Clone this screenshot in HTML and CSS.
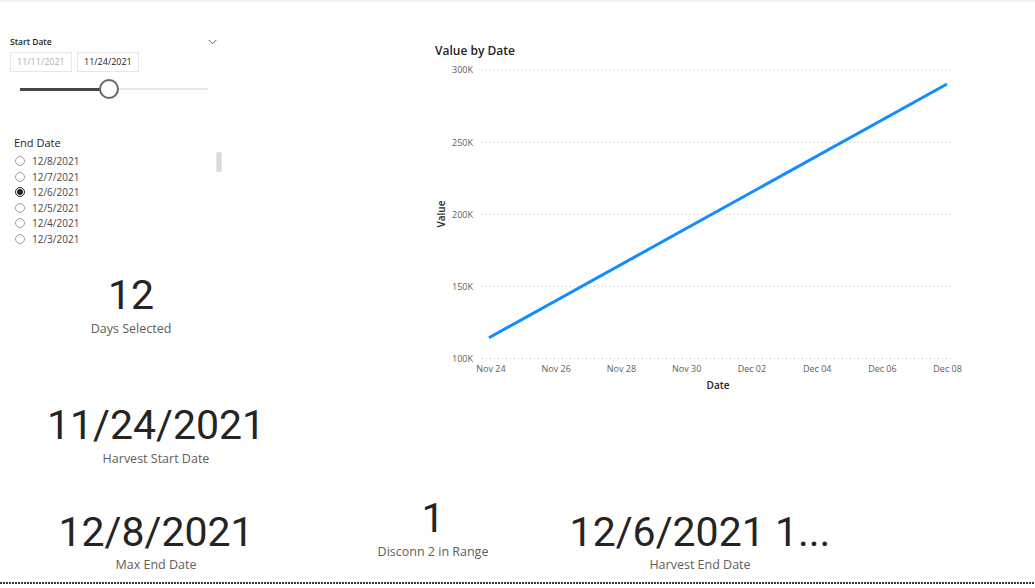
FILE: index.html
```html
<!DOCTYPE html>
<html lang="en">
<head>
<meta charset="UTF-8" />
<meta name="viewport" content="width=device-width, initial-scale=1" />
<title>Harvest Report</title>
<link rel="stylesheet" href="styles.css">
</head>
<body>

<div class="page">
  <div class="topbar"></div>

  <div class="main">
    <div class="left-col">

      <!-- Start date range slicer -->
      <div class="slicer-start">
        <div class="slicer-head">
          <span>Start Date</span>
          <svg class="chevron" width="9" height="6" viewBox="0 0 9 6">
            <polyline points="0.5,0.8 4.5,4.8 8.5,0.8" fill="none" stroke="#605e5c" stroke-width="1" />
          </svg>
        </div>
        <div class="date-inputs">
          <div class="date-box muted">11/11/2021</div>
          <div class="date-box">11/24/2021</div>
        </div>
        <div class="slider">
          <div class="slider-fill"></div>
          <div class="slider-thumb"></div>
          <div class="slider-track"></div>
        </div>
      </div>

      <!-- End date list slicer -->
      <div class="slicer-end">
        <div class="slicer-title">End Date</div>
        <div class="slicer-body">
          <ul class="radio-list">
            <li><span class="radio"></span>12/8/2021</li>
            <li><span class="radio"></span>12/7/2021</li>
            <li><span class="radio checked"></span>12/6/2021</li>
            <li><span class="radio"></span>12/5/2021</li>
            <li><span class="radio"></span>12/4/2021</li>
            <li><span class="radio"></span>12/3/2021</li>
          </ul>
          <div class="scrollbar"></div>
        </div>
      </div>

      <div class="card card-days">
        <div class="card-value">12</div>
        <div class="card-label">Days Selected</div>
      </div>
    </div>

    <!-- Line chart -->
    <svg class="chart" width="560" height="365" viewBox="0 0 560 365">
      <text class="chart-title" x="10" y="20">Value by Date</text>

      <g class="grid">
        <line x1="57" y1="35" x2="527" y2="35" />
        <line x1="57" y1="107.3" x2="527" y2="107.3" />
        <line x1="57" y1="179.3" x2="527" y2="179.3" />
        <line x1="57" y1="251.3" x2="527" y2="251.3" />
        <line x1="57" y1="323.7" x2="527" y2="323.7" />
      </g>

      <g class="y-labels">
        <text x="48" y="38.2">300K</text>
        <text x="48" y="110.5">250K</text>
        <text x="48" y="182.5">200K</text>
        <text x="48" y="254.5">150K</text>
        <text x="48" y="326.9">100K</text>
      </g>

      <g class="x-labels">
        <text x="66" y="336.6">Nov 24</text>
        <text x="131.2" y="336.6">Nov 26</text>
        <text x="196.5" y="336.6">Nov 28</text>
        <text x="261.7" y="336.6">Nov 30</text>
        <text x="326.9" y="336.6">Dec 02</text>
        <text x="392.2" y="336.6">Dec 04</text>
        <text x="457.4" y="336.6">Dec 06</text>
        <text x="522.6" y="336.6">Dec 08</text>
      </g>

      <text class="axis-title" x="20" y="179" transform="rotate(-90 20 179)">Value</text>
      <text class="axis-title" x="293" y="353.5">Date</text>

      <line class="series" x1="64" y1="302.7" x2="522" y2="49" />
    </svg>
  </div>

  <div class="card card-start">
    <div class="card-value">11/24/2021</div>
    <div class="card-label">Harvest Start Date</div>
  </div>

  <div class="card-row">
    <div class="card card-max">
      <div class="card-value">12/8/2021</div>
      <div class="card-label">Max End Date</div>
    </div>
    <div class="card card-disconn">
      <div class="card-value">1</div>
      <div class="card-label">Disconn 2 in Range</div>
    </div>
    <div class="card card-end">
      <div class="card-value">12/6/2021 1...</div>
      <div class="card-label">Harvest End Date</div>
    </div>
  </div>

  <div class="page-edge"></div>
</div>

</body>
</html>
```

FILE: styles.css
```css
* {
  box-sizing: border-box;
}
body {
  margin: 0;
  background: #fff;
  font-family: "Open Sans", "Noto Sans", sans-serif;
  color: #252423;
  overflow: hidden;
}

.page {
  width: 1035px;
  height: 588px;
  display: flex;
  flex-direction: column;
}
.topbar {
  height: 2px;
  background: #f0f0f0;
  flex: none;
}

.main {
  display: flex;
  height: 398px;
  flex: none;
}
.left-col {
  width: 262px;
  flex: none;
}

/* Start Date slicer */
.slicer-start {
  margin: 34px 0 0 10px;
  width: 208px;
}
.slicer-head {
  display: flex;
  justify-content: space-between;
  align-items: center;
  height: 12px;
  line-height: 12px;
  font-size: 8.5px;
  font-weight: 600;
}
.chevron {
  margin-right: 1px;
}
.date-inputs {
  display: flex;
  gap: 5px;
  margin-top: 4px;
}
.date-box {
  width: 62px;
  height: 20px;
  border: 1px solid #e6e6e6;
  font-size: 9px;
  line-height: 18px;
  padding-left: 6px;
  color: #252423;
}
.date-box.muted {
  color: #b3b0ad;
}

.slider {
  display: flex;
  align-items: center;
  height: 20px;
  margin: 7px 0 0 10px;
  width: 188px;
}
.slider-fill {
  width: 80px;
  height: 3px;
  background: #484644;
}
.slider-thumb {
  width: 20px;
  height: 20px;
  margin-left: -1px;
  border-radius: 50%;
  border: 2px solid #666;
  background: #fff;
  flex: none;
}
.slider-track {
  flex: 1;
  height: 2px;
  background: #e6e6e6;
}

/* End Date slicer */
.slicer-end {
  margin: 36px 0 0 14px;
  width: 208px;
}
.slicer-title {
  font-size: 11px;
  line-height: 15px;
  font-weight: 500;
}
.slicer-body {
  display: flex;
  justify-content: space-between;
}
.radio-list {
  list-style: none;
  margin: 0;
  padding: 3.5px 0 0 1px;
}
.radio-list li {
  display: flex;
  align-items: center;
  gap: 7px;
  height: 15.5px;
  font-size: 10px;
  color: #484644;
}
.radio {
  width: 10px;
  height: 10px;
  border-radius: 50%;
  border: 1px solid #a19f9d;
  display: flex;
  align-items: center;
  justify-content: center;
}
.radio.checked {
  border-color: #252423;
}
.radio.checked::after {
  content: "";
  width: 6px;
  height: 6px;
  border-radius: 50%;
  background: #252423;
}
.scrollbar {
  width: 6px;
  height: 20px;
  margin-top: 1.5px;
  background: #d9d9d9;
  border: 1px solid #e8e8e8;
}

/* Cards */
.card {
  text-align: center;
  white-space: nowrap;
}
.card-value {
  font-family: Roboto, "Liberation Sans", sans-serif;
  font-size: 41px;
  line-height: 44px;
  color: #252423;
}
.card-label {
  font-size: 12.5px;
  line-height: 16px;
  color: #605e5c;
}
.card-days {
  margin-top: 26px;
}
.card-days .card-label {
  margin-top: 4px;
}

.card-start {
  width: 312px;
  margin-top: 3px;
  flex: none;
}
.card-start .card-label {
  margin-top: 3.6px;
}

.card-row {
  display: flex;
  align-items: flex-start;
  flex: none;
}
.card-max {
  width: 312px;
  margin-top: 43.4px;
}
.card-disconn {
  width: 242px;
  margin-top: 29.4px;
}
.card-end {
  width: 292px;
  margin-top: 43.4px;
}
.card-max .card-label,
.card-end .card-label {
  margin-top: 3.4px;
}
.card-disconn .card-label {
  margin-top: 4px;
}

.page-edge {
  margin-top: auto;
  margin-bottom: 4px;
  height: 2px;
  background: repeating-linear-gradient(90deg, #3b3a39 0 2px, transparent 2px 3px);
  flex: none;
}

/* Chart */
.chart {
  margin: 33px 0 0 163px;
  flex: none;
  font-family: "Open Sans", "Noto Sans", sans-serif;
}
.chart-title {
  font-size: 12px;
  font-weight: 600;
  fill: #252423;
}
.grid line {
  stroke: #c8c6c4;
  stroke-width: 1;
  stroke-dasharray: 1 3;
}
.y-labels text {
  font-size: 9px;
  fill: #605e5c;
  text-anchor: end;
}
.x-labels text {
  font-size: 9px;
  fill: #605e5c;
  text-anchor: middle;
}
.axis-title {
  font-size: 10px;
  font-weight: 600;
  fill: #252423;
  text-anchor: middle;
}
.series {
  stroke: #118dff;
  stroke-width: 3;
}
```
